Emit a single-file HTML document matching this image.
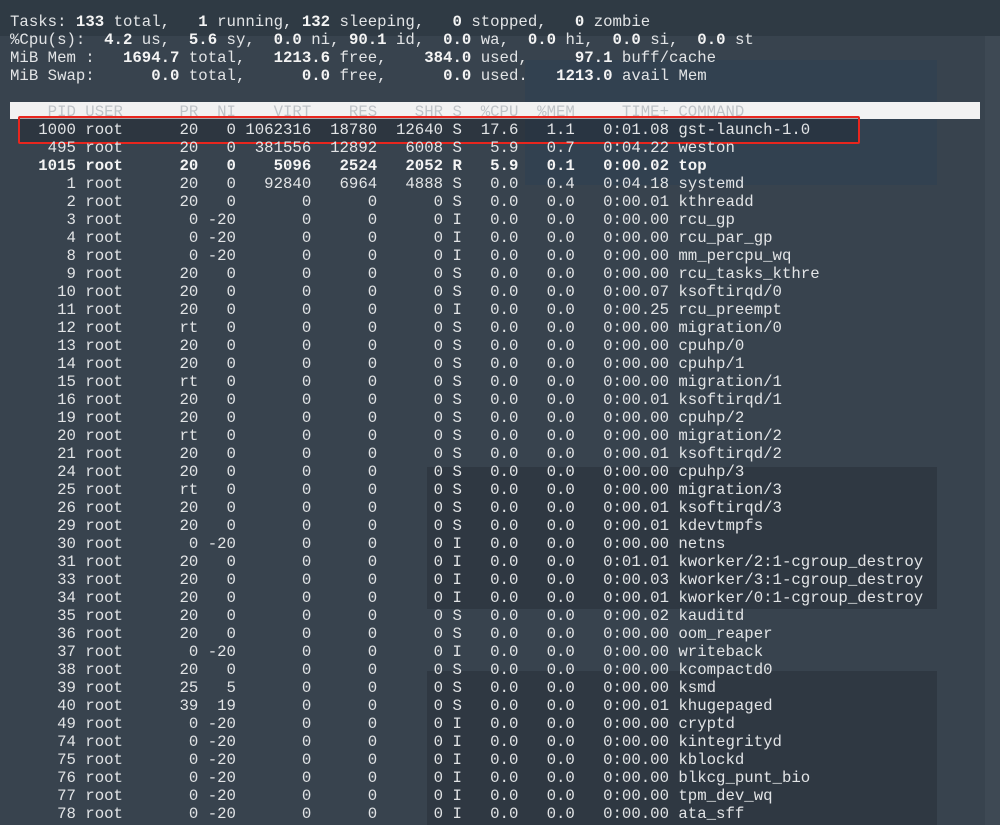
<!DOCTYPE html>
<html><head><meta charset="utf-8"><style>
html,body{margin:0;padding:0;}
body{width:1000px;height:825px;overflow:hidden;background:#38434e;position:relative;font-family:"Liberation Mono","DejaVu Sans Mono",monospace;}
.p{position:absolute;}
pre{position:absolute;left:10px;top:13px;margin:0;font-family:"Liberation Mono",monospace;font-size:15.7px;line-height:18px;color:#e2e4e6;white-space:pre;}
b{font-weight:bold;color:#f4f4f4;}
.hdr{position:absolute;left:10px;top:102px;width:970px;height:17px;background:#f2f2f2;}
.box{position:absolute;left:18px;top:116px;width:838px;height:24px;border:2px solid #e8261e;border-radius:2px;background:rgba(25,32,40,0.35);}
</style></head><body>
<div class="p" style="left:0;top:0;width:1000px;height:36px;background:#2f3a44"></div>
<div class="p" style="left:525px;top:60px;width:412px;height:125px;background:#324150"></div>
<div class="p" style="left:427px;top:467px;width:510px;height:142px;background:#2f3842"></div>
<div class="p" style="left:427px;top:671px;width:510px;height:154px;background:#2f3842"></div>
<div class="p" style="left:985px;top:36px;width:15px;height:789px;background:#3e4954"></div>
<div class="hdr"></div>
<div class="box"></div>
<pre>Tasks: <b>133</b> total,   <b>1</b> running, <b>132</b> sleeping,   <b>0</b> stopped,   <b>0</b> zombie
%Cpu(s):  <b>4.2</b> us,  <b>5.6</b> sy,  <b>0.0</b> ni, <b>90.1</b> id,  <b>0.0</b> wa,  <b>0.0</b> hi,  <b>0.0</b> si,  <b>0.0</b> st
MiB Mem :   <b>1694.7</b> total,   <b>1213.6</b> free,    <b>384.0</b> used,     <b>97.1</b> buff/cache
MiB Swap:      <b>0.0</b> total,      <b>0.0</b> free,      <b>0.0</b> used.   <b>1213.0</b> avail Mem

<span style="color:#bfc3c7">    PID USER      PR  NI    VIRT    RES    SHR S  %CPU  %MEM     TIME+ COMMAND</span>
   1000 root      20   0 1062316  18780  12640 S  17.6   1.1   0:01.08 gst-launch-1.0
    495 root      20   0  381556  12892   6008 S   5.9   0.7   0:04.22 weston
<b>   1015 root      20   0    5096   2524   2052 R   5.9   0.1   0:00.02 top</b>
      1 root      20   0   92840   6964   4888 S   0.0   0.4   0:04.18 systemd
      2 root      20   0       0      0      0 S   0.0   0.0   0:00.01 kthreadd
      3 root       0 -20       0      0      0 I   0.0   0.0   0:00.00 rcu_gp
      4 root       0 -20       0      0      0 I   0.0   0.0   0:00.00 rcu_par_gp
      8 root       0 -20       0      0      0 I   0.0   0.0   0:00.00 mm_percpu_wq
      9 root      20   0       0      0      0 S   0.0   0.0   0:00.00 rcu_tasks_kthre
     10 root      20   0       0      0      0 S   0.0   0.0   0:00.07 ksoftirqd/0
     11 root      20   0       0      0      0 I   0.0   0.0   0:00.25 rcu_preempt
     12 root      rt   0       0      0      0 S   0.0   0.0   0:00.00 migration/0
     13 root      20   0       0      0      0 S   0.0   0.0   0:00.00 cpuhp/0
     14 root      20   0       0      0      0 S   0.0   0.0   0:00.00 cpuhp/1
     15 root      rt   0       0      0      0 S   0.0   0.0   0:00.00 migration/1
     16 root      20   0       0      0      0 S   0.0   0.0   0:00.01 ksoftirqd/1
     19 root      20   0       0      0      0 S   0.0   0.0   0:00.00 cpuhp/2
     20 root      rt   0       0      0      0 S   0.0   0.0   0:00.00 migration/2
     21 root      20   0       0      0      0 S   0.0   0.0   0:00.01 ksoftirqd/2
     24 root      20   0       0      0      0 S   0.0   0.0   0:00.00 cpuhp/3
     25 root      rt   0       0      0      0 S   0.0   0.0   0:00.00 migration/3
     26 root      20   0       0      0      0 S   0.0   0.0   0:00.01 ksoftirqd/3
     29 root      20   0       0      0      0 S   0.0   0.0   0:00.01 kdevtmpfs
     30 root       0 -20       0      0      0 I   0.0   0.0   0:00.00 netns
     31 root      20   0       0      0      0 I   0.0   0.0   0:01.01 kworker/2:1-cgroup_destroy
     33 root      20   0       0      0      0 I   0.0   0.0   0:00.03 kworker/3:1-cgroup_destroy
     34 root      20   0       0      0      0 I   0.0   0.0   0:00.01 kworker/0:1-cgroup_destroy
     35 root      20   0       0      0      0 S   0.0   0.0   0:00.02 kauditd
     36 root      20   0       0      0      0 S   0.0   0.0   0:00.00 oom_reaper
     37 root       0 -20       0      0      0 I   0.0   0.0   0:00.00 writeback
     38 root      20   0       0      0      0 S   0.0   0.0   0:00.00 kcompactd0
     39 root      25   5       0      0      0 S   0.0   0.0   0:00.00 ksmd
     40 root      39  19       0      0      0 S   0.0   0.0   0:00.01 khugepaged
     49 root       0 -20       0      0      0 I   0.0   0.0   0:00.00 cryptd
     74 root       0 -20       0      0      0 I   0.0   0.0   0:00.00 kintegrityd
     75 root       0 -20       0      0      0 I   0.0   0.0   0:00.00 kblockd
     76 root       0 -20       0      0      0 I   0.0   0.0   0:00.00 blkcg_punt_bio
     77 root       0 -20       0      0      0 I   0.0   0.0   0:00.00 tpm_dev_wq
     78 root       0 -20       0      0      0 I   0.0   0.0   0:00.00 ata_sff</pre>
</body></html>
